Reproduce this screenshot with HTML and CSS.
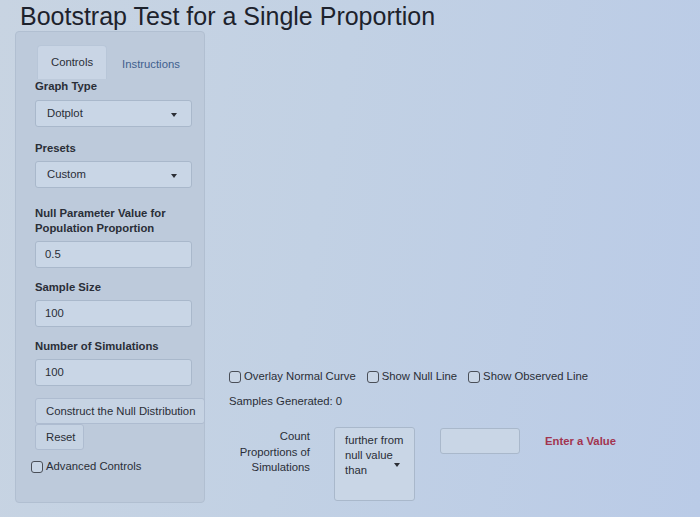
FILE: index.html
```html
<!DOCTYPE html>
<html lang="en">
<head>
<meta charset="utf-8">
<title>Bootstrap Test for a Single Proportion</title>
<link rel="stylesheet" href="styles.css">
</head>
<body>
<h1 class="title">Bootstrap Test for a Single Proportion</h1>
<div class="layout">
  <aside class="well">
    <ul class="tabs">
      <li class="tab active">Controls</li>
      <li class="tab link">Instructions</li>
    </ul>
    <div class="group g1">
      <div class="label">Graph Type</div>
      <div class="select">Dotplot<span class="caret"></span></div>
    </div>
    <div class="group g2">
      <div class="label">Presets</div>
      <div class="select">Custom<span class="caret"></span></div>
    </div>
    <div class="group g3">
      <div class="label">Null Parameter Value for<br>Population Proportion</div>
      <div class="input">0.5</div>
    </div>
    <div class="group g4">
      <div class="label">Sample Size</div>
      <div class="input">100</div>
    </div>
    <div class="group g5">
      <div class="label">Number of Simulations</div>
      <div class="input">100</div>
    </div>
    <div class="btn construct">Construct the Null Distribution</div>
    <div class="btn reset">Reset</div>
    <div class="check adv"><span class="box"></span>Advanced Controls</div>
  </aside>
  <main class="main">
    <div class="checks">
      <div class="check"><span class="box"></span>Overlay Normal Curve</div>
      <div class="check"><span class="box"></span>Show Null Line</div>
      <div class="check"><span class="box"></span>Show Observed Line</div>
    </div>
    <div class="samples">Samples Generated: 0</div>
    <div class="count-row">
      <div class="count-label">Count<br>Proportions of<br>Simulations</div>
      <div class="select tall">further from<br>null value<br>than<span class="caret"></span></div>
      <div class="input empty"></div>
      <div class="enter">Enter a Value</div>
    </div>
  </main>
</div>
</body>
</html>
```

FILE: styles.css
```css
* { box-sizing: border-box; }

html, body { height: 100%; }

body {
  margin: 0;
  font-family: "Liberation Sans", Arial, sans-serif;
  font-size: 11.3px;
  color: #2a2e37;
  background: linear-gradient(100deg, #c8d4e2 0%, #c2d1e4 45%, #bacbe7 100%);
  overflow: hidden;
}

.title {
  margin: 0;
  padding: 1px 0 0 20px;
  font-size: 25px;
  line-height: 30px;
  font-weight: normal;
  color: #1d222c;
}

.layout {
  display: flex;
  align-items: flex-start;
}

.well {
  margin-left: 15px;
  width: 190px;
  height: 472px;
  background: #bdcadb;
  border: 1px solid #b1bfd1;
  border-radius: 4px;
  padding: 13px 0 0 19px;
}

.tabs {
  list-style: none;
  margin: 0 0 0 2px;
  padding: 0;
  display: flex;
  height: 34px;
}

.tab {
  height: 34px;
  line-height: 34px;
  padding: 0 13px;
}

.tab.active {
  background: #c9d5e5;
  border: 1px solid #b8c6d8;
  border-bottom: none;
  border-radius: 4px 4px 0 0;
  line-height: 33px;
}

.tab.link {
  color: #3f5f8e;
  padding-left: 15px;
  padding-top: 2px;
}

.label {
  font-weight: bold;
  line-height: 15px;
  margin-bottom: 5px;
}

.g1 { margin-top: 0; }
.g1 .label { margin-bottom: 6px; }
.g2 { margin-top: 14px; }
.g3 { margin-top: 18px; }
.g4 { margin-top: 12px; }
.g5 { margin-top: 12px; }

.select, .input {
  position: relative;
  width: 157px;
  height: 27px;
  line-height: 25px;
  padding-left: 11px;
  background: #c9d6e6;
  border: 1px solid #a9b8cb;
  border-radius: 3px;
}

.input { padding-left: 9px; }

.caret {
  position: absolute;
  right: 14px;
  top: 50%;
  margin-top: -1px;
  width: 0;
  height: 0;
  border-top: 4px solid #2c2f36;
  border-left: 3.5px solid transparent;
  border-right: 3.5px solid transparent;
}

.btn {
  height: 26px;
  line-height: 24px;
  background: #c6d3e3;
  border: 1px solid #aebcd0;
  border-radius: 3px;
  padding-left: 10px;
}

.construct {
  margin-top: 12px;
  width: 170px;
}

.reset { width: 49px; }

.check {
  display: flex;
  align-items: center;
  line-height: 15px;
}

.box {
  width: 12px;
  height: 12px;
  border: 1.4px solid #4a4f58;
  border-radius: 3px;
  margin-right: 3px;
  background: #c9d6e6;
}

.adv {
  margin-top: 9px;
  margin-left: -4px;
}

.main {
  margin-left: 24px;
  padding-top: 338px;
}

.checks {
  display: flex;
  gap: 11px;
}

.samples {
  margin-top: 10px;
  line-height: 15px;
}

.count-row {
  display: flex;
  align-items: flex-start;
  margin-top: 18px;
}

.count-label {
  width: 81px;
  text-align: right;
  line-height: 15.5px;
  padding-top: 2px;
}

.select.tall {
  margin-left: 24px;
  width: 81px;
  height: 74px;
  line-height: 15px;
  padding: 5px 0 0 10px;
}

.input.empty {
  margin-left: 25px;
  margin-top: 1px;
  width: 80px;
  height: 26px;
}

.enter {
  margin-left: 25px;
  padding-top: 7px;
  line-height: 15px;
  font-weight: bold;
  color: #a2344f;
}
```
